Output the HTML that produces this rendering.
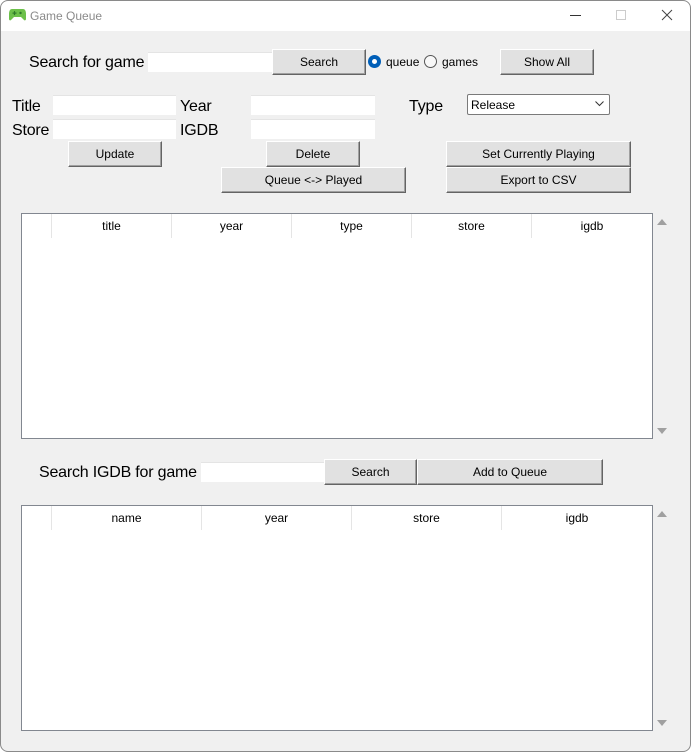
<!DOCTYPE html>
<html><head><meta charset="utf-8"><style>
*{box-sizing:border-box;margin:0;padding:0}
html,body{width:691px;height:752px;overflow:hidden;background:#fff}
.win{position:absolute;left:0;top:0;width:691px;height:752px;background:#f0f0f0;border-radius:8px;overflow:hidden;font-family:"Liberation Sans",sans-serif}
.frame{position:absolute;left:0;top:0;width:691px;height:752px;border:1px solid #8a8a8a;border-radius:8px;pointer-events:none}
.title{position:absolute;left:0;top:0;width:691px;height:31px;background:#fff}
.title .t{position:absolute;left:30px;top:9px;font-size:12px;color:#8a8a8a}
.a{position:absolute}
.lbl{position:absolute;font-size:16px;color:#000;line-height:18px;letter-spacing:-0.2px;margin-top:1px}
.in{position:absolute;background:#fff;height:20px;border-top:1px solid #e4e4e4}
.btn{position:absolute;height:26px;background:#e1e1e1;border:1px solid #fff;border-right-color:#646464;border-bottom-color:#646464;box-shadow:inset -1px -1px 0 #a0a0a0;font-size:12px;text-align:center;line-height:25px;color:#000}
.tree{position:absolute;left:21px;width:632px;height:226px;background:#fff;border:1px solid #828790}
.hd{position:absolute;top:0;height:24px;font-size:12px;text-align:center;line-height:25px;border-left:1px solid #e5e5e5}
.sa{position:absolute;left:657px;width:0;height:0;border-left:5px solid transparent;border-right:5px solid transparent}
.up{border-bottom:6px solid #a0a0a0}
.dn{border-top:6px solid #a0a0a0}
.sm{font-size:12px;margin-top:1px}
</style></head><body><div class="win">
<div class="title">
<svg class="a" style="left:9px;top:8px" width="17" height="13" viewBox="0 0 17 13"><path d="M3 1h11c2 0 3 2 3 5v5c0 1-1 2-2 1l-3-3H5L2 12c-1 1-2 0-2-1V6C0 3 1 1 3 1z" fill="#6cc04a"/><circle cx="11.5" cy="5" r="1.2" fill="#2f7a2a"/><rect x="3.5" y="4.5" width="4" height="1.2" fill="#2f7a2a"/><rect x="4.9" y="3.1" width="1.2" height="4" fill="#2f7a2a"/></svg>
<div class="t">Game Queue</div>
<div class="a" style="left:570px;top:15px;width:11px;height:1px;background:#333"></div>
<div class="a" style="left:616px;top:10px;width:10px;height:10px;border:1px solid #ccc"></div>
<svg class="a" style="left:661px;top:9px" width="12" height="12"><path d="M1 1L11 11M11 1L1 11" stroke="#444" stroke-width="1"/></svg>
</div>

<div class="lbl" style="left:29px;top:53px">Search for game</div>
<div class="in" style="left:148px;top:52px;width:124px"></div>
<div class="btn" style="left:272px;top:49px;width:94px">Search</div>
<div class="a" style="left:368px;top:55px;width:13px;height:13px;border-radius:50%;background:#005fb8"></div>
<div class="a" style="left:372px;top:59px;width:5px;height:5px;border-radius:50%;background:#fff"></div>
<div class="a sm" style="left:386px;top:54px">queue</div>
<div class="a" style="left:424px;top:55px;width:13px;height:13px;border-radius:50%;border:1px solid #555;background:#f8f8f8"></div>
<div class="a sm" style="left:442px;top:54px">games</div>
<div class="btn" style="left:500px;top:49px;width:94px">Show All</div>

<div class="lbl" style="left:12px;top:97px">Title</div>
<div class="in" style="left:53px;top:95px;width:123px"></div>
<div class="lbl" style="left:180px;top:97px">Year</div>
<div class="in" style="left:251px;top:95px;width:124px"></div>
<div class="lbl" style="left:409px;top:97px">Type</div>
<div class="a" style="left:467px;top:94px;width:143px;height:21px;background:#fff;border:1px solid #7a7a7a;border-radius:2px;font-size:12px;line-height:20px;padding-left:3px">Release</div>
<svg class="a" style="left:595px;top:101px" width="9" height="6"><path d="M0.5 0.5L4.5 4.5L8.5 0.5" stroke="#333" fill="none"/></svg>
<div class="lbl" style="left:12px;top:121px">Store</div>
<div class="in" style="left:53px;top:119px;width:123px"></div>
<div class="lbl" style="left:180px;top:121px">IGDB</div>
<div class="in" style="left:251px;top:119px;width:124px"></div>

<div class="btn" style="left:68px;top:141px;width:94px">Update</div>
<div class="btn" style="left:266px;top:141px;width:94px">Delete</div>
<div class="btn" style="left:446px;top:141px;width:185px">Set Currently Playing</div>
<div class="btn" style="left:221px;top:167px;width:185px">Queue &lt;-&gt; Played</div>
<div class="btn" style="left:446px;top:167px;width:185px">Export to CSV</div>

<div class="tree" style="top:213px">
<div class="hd" style="left:29px;width:120px">title</div>
<div class="hd" style="left:149px;width:120px">year</div>
<div class="hd" style="left:269px;width:120px">type</div>
<div class="hd" style="left:389px;width:120px">store</div>
<div class="hd" style="left:509px;width:121px">igdb</div>
</div>
<div class="sa up" style="top:219px"></div>
<div class="sa dn" style="top:428px"></div>

<div class="lbl" style="left:39px;top:463px">Search IGDB for game</div>
<div class="in" style="left:201px;top:462px;width:124px"></div>
<div class="btn" style="left:324px;top:459px;width:93px">Search</div>
<div class="btn" style="left:417px;top:459px;width:186px">Add to Queue</div>

<div class="tree" style="top:505px">
<div class="hd" style="left:29px;width:150px">name</div>
<div class="hd" style="left:179px;width:150px">year</div>
<div class="hd" style="left:329px;width:150px">store</div>
<div class="hd" style="left:479px;width:151px">igdb</div>
</div>
<div class="sa up" style="top:511px"></div>
<div class="sa dn" style="top:720px"></div>
</div><div class="frame"></div></body></html>
